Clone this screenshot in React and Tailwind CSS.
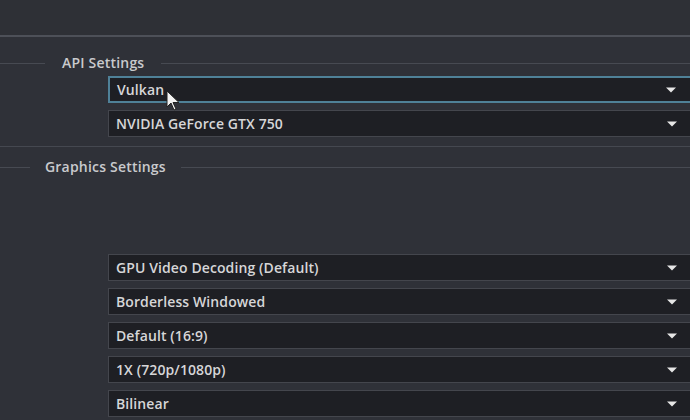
import React from "react";

function Arrow() {
  return (
    <svg width="10" height="6" viewBox="0 0 10 6" className="shrink-0">
      <path d="M0 0.5 L10 0.5 L5 5.5 Z" fill="#e6e6e6" />
    </svg>
  );
}

function Combo({ label, active = false, className = "" }) {
  return (
    <div
      className={`ml-[108px] w-[600px] h-[27px] flex items-center justify-between pl-[7px] pr-[30px] bg-[#1e1f24] border ${
        active ? "border-[#4f8198] border-2 pl-[6px]" : "border-[#44464d]"
      } ${className}`}
    >
      <span className="text-[14px] font-semibold text-[#d6d6d8] tracking-[0.1px] leading-none">{label}</span>
      <Arrow />
    </div>
  );
}

function Header({ title, left, gap }) {
  return (
    <div className="flex items-center h-[16px]">
      <div className="h-px bg-[#474a52]" style={{ width: left }} />
      <span
        className="text-[14px] font-semibold text-[#c9cacd] tracking-[0.2px] leading-none whitespace-nowrap"
        style={{ paddingLeft: gap, paddingRight: gap }}
      >
        {title}
      </span>
      <div className="h-px flex-1 bg-[#474a52]" />
    </div>
  );
}

export default function App() {
  return (
    <div
      className="relative w-[690px] h-[420px] overflow-hidden bg-[#2f3138] flex flex-col"
      style={{ fontFamily: '"Open Sans", "Liberation Sans", sans-serif' }}
    >
      <div className="h-[35px] shrink-0 bg-[#2e3036]" />
      <div className="h-[2px] shrink-0 bg-[#4d5058]" />
      <div className="mt-[18px]">
        <Header title="API Settings" left={45} gap={17} />
      </div>
      <div className="mt-[5px] flex flex-col gap-[7px]">
        <Combo label="Vulkan" active />
        <Combo label="NVIDIA GeForce GTX 750" />
      </div>
      <div className="mt-[9px] h-px shrink-0 bg-[#454850]" />
      <div className="mt-[12px]">
        <Header title="Graphics Settings" left={30} gap={15} />
      </div>
      <div className="mt-[79px] flex flex-col gap-[7px]">
        <Combo label="GPU Video Decoding (Default)" />
        <Combo label="Borderless Windowed" />
        <Combo label="Default (16:9)" />
        <Combo label="1X (720p/1080p)" />
        <Combo label="Bilinear" />
      </div>
      <svg
        className="absolute left-[166px] top-[90px]"
        width="14"
        height="21"
        viewBox="0 0 14 21"
      >
        <path
          d="M1 1 L1 17 L5 13 L8 20 L10 19 L7 12.5 L13 12.5 Z"
          fill="#f2f2f2"
          stroke="#222"
          strokeWidth="1"
          strokeLinejoin="round"
        />
      </svg>
    </div>
  );
}
